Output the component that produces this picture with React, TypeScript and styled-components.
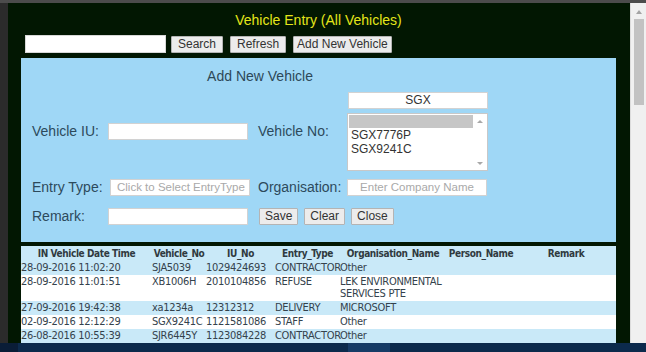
import React from "react"
import styled, { createGlobalStyle } from "styled-components"

const GlobalStyle = createGlobalStyle`
  html, body {
    margin: 0;
    padding: 0;
    background: #2b2b2b;
  }
  * {
    box-sizing: border-box;
  }
`

type Entry = {
  date: string
  vehicle: string
  iu: string
  type: string
  org: string
  person: string
  remark: string
}

const entries: Entry[] = [
  { date: "28-09-2016 11:02:20", vehicle: "SJA5039", iu: "1029424693", type: "CONTRACTOR", org: "Other", person: "", remark: "" },
  { date: "28-09-2016 11:01:51", vehicle: "XB1006H", iu: "2010104856", type: "REFUSE", org: "LEK ENVIRONMENTAL SERVICES PTE", person: "", remark: "" },
  { date: "27-09-2016 19:42:38", vehicle: "xa1234a", iu: "12312312", type: "DELIVERY", org: "MICROSOFT", person: "", remark: "" },
  { date: "02-09-2016 12:12:29", vehicle: "SGX9241C", iu: "1121581086", type: "STAFF", org: "Other", person: "", remark: "" },
  { date: "26-08-2016 10:55:39", vehicle: "SJR6445Y", iu: "1123084228", type: "CONTRACTOR", org: "Other", person: "", remark: "" },
]

const columns = [
  { title: "IN Vehicle Date Time", width: 131 },
  { title: "Vehicle_No", width: 54 },
  { title: "IU_No", width: 69 },
  { title: "Entry_Type", width: 65 },
  { title: "Organisation_Name", width: 106 },
  { title: "Person_Name", width: 70 },
  { title: "Remark", width: 100 },
]

const S = {
  Screen: styled.div`
    width: 646px;
    height: 352px;
    display: flex;
    flex-direction: column;
    overflow: hidden;
    font-family: "Liberation Sans", Arial, sans-serif;
  `,
  Window: styled.div`
    flex: 1;
    display: flex;
    min-height: 0;
    border-top: 3px solid #4c4c4c;
  `,
  Gutter: styled.div`
    width: 8px;
    background: #2b2b2b;
  `,
  Content: styled.div`
    flex: 1;
    min-width: 0;
    background: #021702;
    padding: 9px 14px 0 13px;
    display: flex;
    flex-direction: column;
  `,
  Title: styled.h1`
    margin: 0;
    font-size: 14px;
    line-height: 16px;
    font-weight: normal;
    color: #e4e61a;
    text-align: center;
  `,
  Toolbar: styled.div`
    display: flex;
    align-items: center;
    gap: 7px;
    margin: 7px 0 0 4px;
    height: 18px;
  `,
  SearchInput: styled.div`
    width: 141px;
    height: 18px;
    background: #fff;
    border: 1px solid #d8d8d8;
    margin-right: -2px;
  `,
  Button: styled.button<{ $pad?: number }>`
    height: 17px;
    padding: 0 ${({ $pad }) => $pad ?? 5}px;
    font-family: "Liberation Sans", Arial, sans-serif;
    font-size: 12px;
    line-height: 15px;
    color: #333;
    background: #ececec;
    border: 1px solid #b4b4b4;
    border-radius: 1px;
  `,
  Panel: styled.div`
    margin-top: 5px;
    height: 184px;
    background: #9fd7f6;
    padding: 10px 0 0 11px;
  `,
  Form: styled.div`
    width: 456px;
  `,
  Caption: styled.div`
    text-align: center;
    font-size: 14px;
    line-height: 16px;
    color: #2d4858;
    margin-bottom: 8px;
  `,
  FormGrid: styled.div`
    display: grid;
    grid-template-columns: 76px 150px 89px 141px;
    grid-template-rows: 78px 26px 29px;
    align-items: end;
  `,
  Label: styled.span<{ $middle?: boolean }>`
    font-size: 14px;
    line-height: 16px;
    color: #2d4a5c;
    align-self: ${({ $middle }) => ($middle ? "center" : "end")};
    margin-bottom: ${({ $middle }) => ($middle ? "0" : "1px")};
  `,
  Field: styled.div<{ $center?: boolean; $middle?: boolean; $shift?: number }>`
    width: 140px;
    height: 17px;
    background: #fff;
    border: 1px solid #d2d2d2;
    font-size: 11.5px;
    line-height: 15px;
    padding: ${({ $center }) => ($center ? "0" : "0 0 0 6px")};
    color: #a9a9a9;
    text-align: ${({ $center }) => ($center ? "center" : "left")};
    align-self: ${({ $middle }) => ($middle ? "center" : "end")};
    margin-left: ${({ $shift }) => $shift ?? 0}px;
    white-space: nowrap;
    overflow: hidden;
  `,
  Value: styled.span`
    color: #333;
    font-size: 12px;
  `,
  VehicleNoCell: styled.div`
    align-self: start;
    display: flex;
    flex-direction: column;
    gap: 4px;
  `,
  ListBox: styled.div`
    position: relative;
    width: 141px;
    height: 58px;
    background: #fff;
    border: 1px solid #c8c8c8;
    padding: 1px 14px 0 1px;
    font-size: 12px;
    line-height: 14px;
    color: #333;
  `,
  Option: styled.div<{ $selected?: boolean }>`
    height: ${({ $selected }) => ($selected ? "13px" : "14px")};
    padding-left: 2px;
    background: ${({ $selected }) => ($selected ? "#c6c6c6" : "transparent")};
  `,
  ScrollArrow: styled.span<{ $down?: boolean }>`
    position: absolute;
    right: 4px;
    ${({ $down }) => ($down ? "bottom: 5px;" : "top: 6px;")}
    width: 0;
    height: 0;
    border-left: 3px solid transparent;
    border-right: 3px solid transparent;
    ${({ $down }) =>
      $down ? "border-top: 3px solid #a8a8a8;" : "border-bottom: 3px solid #a8a8a8;"}
  `,
  Actions: styled.div`
    grid-column: 3 / 5;
    display: flex;
    gap: 6px;
    margin-left: 1px;
  `,
  TableWrap: styled.div`
    margin-top: 4px;
    flex: 1;
    min-height: 0;
    overflow: hidden;
    background: #fff;
  `,
  Table: styled.table`
    width: 595px;
    table-layout: fixed;
    border-collapse: collapse;
    font-family: "Liberation Sans Narrow", "DejaVu Sans Condensed", "Liberation Sans", sans-serif;
    font-size: 11px;
    line-height: 12px;
    color: #34424c;
  `,
  HeadCell: styled.th`
    font-size: 10px;
    letter-spacing: -0.4px;
    font-weight: bold;
    text-align: center;
    padding: 2px 0 1px;
    color: #303a40;
    background: #c9e9f8;
    white-space: nowrap;
  `,
  Row: styled.tr<{ $odd: boolean }>`
    background: ${({ $odd }) => ($odd ? "#c9e9f8" : "#fff")};
  `,
  Cell: styled.td`
    padding: 1px 0 1px 0;
    letter-spacing: -0.3px;
    vertical-align: top;
    text-align: left;
  `,
  Scrollbar: styled.div`
    width: 16px;
    background: #f0f0f0;
    border-left: 1px solid #dcdcdc;
    display: flex;
    flex-direction: column;
    align-items: center;
    padding-top: 7px;
  `,
  ArrowUp: styled.span`
    width: 0;
    height: 0;
    border-left: 3px solid transparent;
    border-right: 3px solid transparent;
    border-bottom: 4px solid #a3a3a3;
  `,
  Thumb: styled.div`
    margin-top: 5px;
    width: 10px;
    height: 86px;
    background: #c2c2c2;
  `,
  Taskbar: styled.div`
    height: 9px;
    display: flex;
    background: #0c2a4c;
  `,
  TaskStart: styled.div`
    width: 18px;
    background: #0a1d37;
  `,
  TaskSpacer: styled.div<{ $w: number }>`
    width: ${({ $w }) => $w}px;
  `,
  TaskItem: styled.div`
    width: 42px;
    background: #163b66;
  `,
}

export default function App() {
  return (
    <>
      <GlobalStyle />
      <S.Screen>
        <S.Window>
          <S.Gutter />
          <S.Content>
            <S.Title>Vehicle Entry (All Vehicles)</S.Title>
            <S.Toolbar>
              <S.SearchInput />
              <S.Button $pad={6}>Search</S.Button>
              <S.Button $pad={6}>Refresh</S.Button>
              <S.Button $pad={3}>Add New Vehicle</S.Button>
            </S.Toolbar>

            <S.Panel>
              <S.Form>
                <S.Caption>Add New Vehicle</S.Caption>
                <S.FormGrid>
                  <S.Label $middle>Vehicle IU:</S.Label>
                  <S.Field $middle />
                  <S.Label $middle>Vehicle No:</S.Label>
                  <S.VehicleNoCell>
                    <S.Field $center>
                      <S.Value>SGX</S.Value>
                    </S.Field>
                    <S.ListBox>
                      <S.Option $selected />
                      <S.Option>SGX7776P</S.Option>
                      <S.Option>SGX9241C</S.Option>
                      <S.ScrollArrow />
                      <S.ScrollArrow $down />
                    </S.ListBox>
                  </S.VehicleNoCell>

                  <S.Label>Entry Type:</S.Label>
                  <S.Field $shift={2}>Click to Select EntryType</S.Field>
                  <S.Label>Organisation:</S.Label>
                  <S.Field $center>Enter Company Name</S.Field>

                  <S.Label>Remark:</S.Label>
                  <S.Field />
                  <S.Actions>
                    <S.Button>Save</S.Button>
                    <S.Button>Clear</S.Button>
                    <S.Button>Close</S.Button>
                  </S.Actions>
                </S.FormGrid>
              </S.Form>
            </S.Panel>

            <S.TableWrap>
              <S.Table>
                <colgroup>
                  {columns.map((c) => (
                    <col key={c.title} style={{ width: c.width }} />
                  ))}
                </colgroup>
                <thead>
                  <tr>
                    {columns.map((c) => (
                      <S.HeadCell key={c.title}>{c.title}</S.HeadCell>
                    ))}
                  </tr>
                </thead>
                <tbody>
                  {entries.map((e, i) => (
                    <S.Row key={e.date} $odd={i % 2 === 0}>
                      <S.Cell>{e.date}</S.Cell>
                      <S.Cell>{e.vehicle}</S.Cell>
                      <S.Cell>{e.iu}</S.Cell>
                      <S.Cell>{e.type}</S.Cell>
                      <S.Cell>{e.org}</S.Cell>
                      <S.Cell>{e.person}</S.Cell>
                      <S.Cell>{e.remark}</S.Cell>
                    </S.Row>
                  ))}
                </tbody>
              </S.Table>
            </S.TableWrap>
          </S.Content>
          <S.Scrollbar>
            <S.ArrowUp />
            <S.Thumb />
          </S.Scrollbar>
        </S.Window>
        <S.Taskbar>
          <S.TaskStart />
          <S.TaskSpacer $w={330} />
          <S.TaskItem />
        </S.Taskbar>
      </S.Screen>
    </>
  )
}
